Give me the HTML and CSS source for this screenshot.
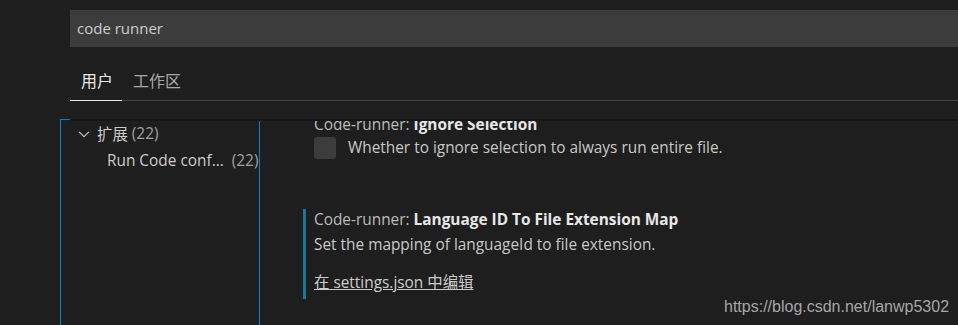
FILE: index.html
```html
<!DOCTYPE html>
<html>
<head>
    <meta charset="UTF-8">
    <title>设置</title>
    <link rel="stylesheet" href="styles.css">
</head>
<body>
    <div class="header">
        <div class="search">code runner</div>
        <div class="tabs">
            <div class="tab active">用户</div>
            <div class="tab">工作区</div>
        </div>
    </div>

    <div class="main">
        <div class="tree">
            <div class="row group">
                <svg class="chevron" width="14" height="14" viewBox="0 0 16 16"><path d="M2.5 5.5 L8 11 L13.5 5.5" fill="none" stroke="#c5c5c5" stroke-width="1.3"/></svg>
                <span class="label">扩展</span><span class="count">(22)</span>
            </div>
            <div class="row child">
                <span class="label">Run Code conf...</span><span class="count">(22)</span>
            </div>
        </div>

        <div class="settings">
            <div class="setting first">
                <div class="title">Code-runner: <b>Ignore Selection</b></div>
                <div class="check-row">
                    <span class="checkbox"></span>
                    <span class="desc">Whether to ignore selection to always run entire file.</span>
                </div>
            </div>
            <div class="setting focused">
                <div class="title">Code-runner: <b>Language ID To File Extension Map</b></div>
                <div class="desc">Set the mapping of languageId to file extension.</div>
                <a class="edit-link" href="#">在 settings.json 中编辑</a>
            </div>
        </div>
    </div>

    <div class="watermark">https://blog.csdn.net/lanwp5302</div>
</body>
</html>
```

FILE: styles.css
```css
body {
    margin: 0;
    background-color: #1e1e1e;
    color: #cccccc;
    font-family: "Open Sans", "Noto Sans CJK SC", sans-serif;
    font-size: 15.4px;
    height: 325px;
    overflow: hidden;
    position: relative;
}
.header {
    padding: 10px 0 0 70px;
}
.search {
    height: 37px;
    line-height: 37px;
    background-color: #3c3c3c;
    padding-left: 7px;
    font-size: 15px;
    color: #cccccc;
}
.tabs {
    display: flex;
    height: 53px;
    border-bottom: 1px solid #454545;
    align-items: flex-end;
}
.tab {
    padding: 0 9px 0 11px;
    height: 53px;
    line-height: 68px;
    font-size: 16px;
    color: #a8a8a8;
    box-sizing: border-box;
}
.tab.active {
    color: #e7e7e7;
    border-bottom: 1px solid #e7e7e7;
    margin-bottom: -1px;
    height: 54px;
}
.main {
    display: flex;
    margin: 18px 0 0 60px;
    position: relative;
    height: 206px;
}
.main::before {
    content: "";
    position: absolute;
    left: 10px;
    right: 0;
    top: 0;
    height: 2px;
    background-color: #171717;
    z-index: 2;
}
.tree {
    width: 198px;
    border: 1px solid #007fd4;
    border-bottom: none;
    flex-shrink: 0;
}
.row {
    height: 27px;
    display: flex;
    align-items: center;
    white-space: nowrap;
}
.row.group {
    padding-left: 16px;
}
.chevron {
    margin-right: 6px;
}
.row.child {
    padding-left: 46px;
}
.count {
    margin-left: 4px;
    color: #a0a0a0;
}
.row.child .count {
    margin-left: 8px;
}
.settings {
    flex: 1;
    padding-left: 43px;
    overflow: hidden;
}
.setting {
    padding-left: 8px;
    border-left: 3px solid transparent;
}
.setting.first {
    margin-top: -5px;
}
.setting.focused {
    border-left-color: #127a9c;
    margin-top: 50px;
    padding-bottom: 5px;
}
.title {
    line-height: 22px;
    color: #bbbbbb;
}
.title b {
    color: #e7e7e7;
}
.check-row {
    display: flex;
    align-items: center;
    margin-top: 1px;
}
.checkbox {
    width: 22px;
    height: 22px;
    border-radius: 3px;
    background-color: #3c3c3c;
    margin-right: 12px;
}
.desc {
    line-height: 22px;
    color: #c8c8c8;
}
.setting.focused .desc {
    margin-top: 3px;
}
.edit-link {
    display: inline-block;
    margin-top: 16px;
    color: #cccccc;
    text-decoration: underline;
    line-height: 22px;
}
.watermark {
    position: absolute;
    left: 724px;
    top: 298px;
    font-family: "Liberation Sans", Arial, sans-serif;
    font-size: 16px;
    color: #a6a6a6;
}
```
